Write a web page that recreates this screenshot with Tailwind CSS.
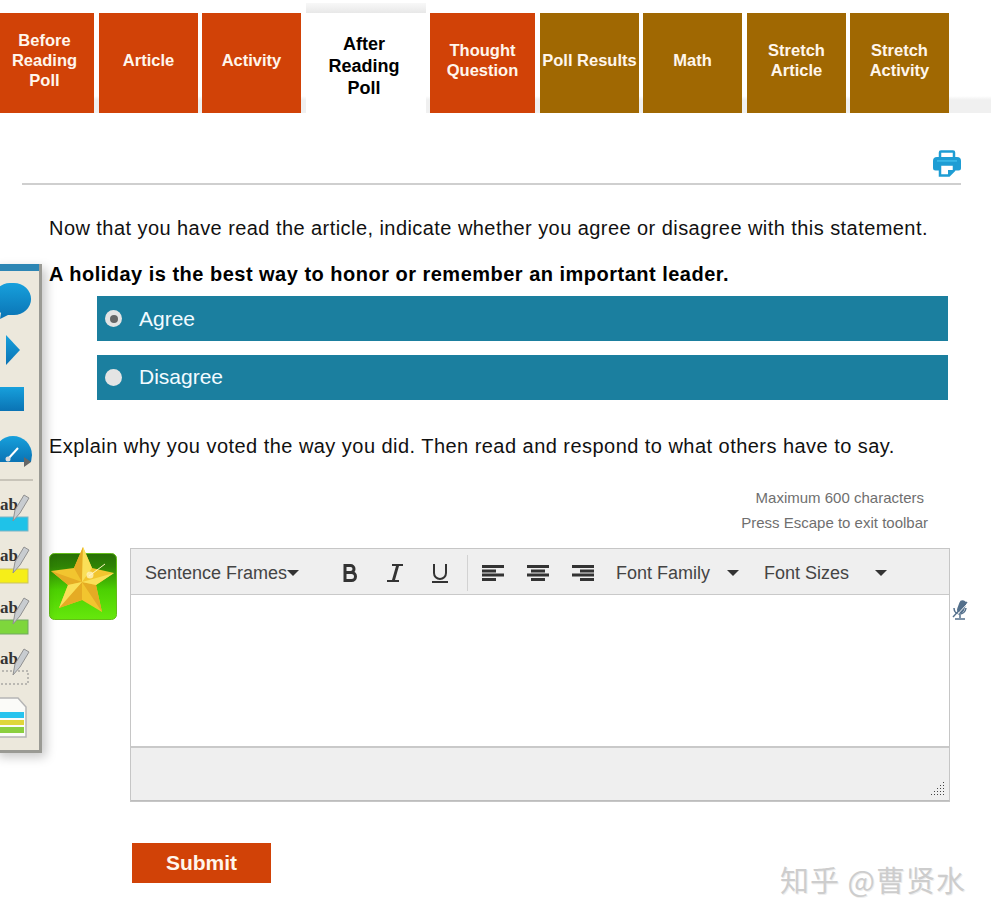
<!DOCTYPE html>
<html><head><meta charset="utf-8"><script src="https://cdn.jsdelivr.net/npm/@tailwindcss/browser@4"></script></head>
<body class="bg-white">
<div class="relative w-[991px] h-[920px] overflow-hidden bg-white font-['Liberation_Sans',sans-serif] text-[#111]">
  <!-- tabs -->
  <div class="h-[113px] pt-[13px] relative bg-[linear-gradient(to_bottom,#fff_0,#fff_96px,#f0f0f0_100px)]">
    <div class="flex items-start ml-[-5px] font-bold text-[16.5px] leading-[20px] text-[#fff6ec] text-center">
      <div class="w-[99px] h-[100px] bg-[#d14207] flex justify-center pt-[17px]"><span>Before<br>Reading<br>Poll</span></div>
      <div class="w-[99px] h-[100px] bg-[#d14207] ml-[5px] flex justify-center pt-[37px]">Article</div>
      <div class="w-[99px] h-[100px] bg-[#d14207] ml-[4px] flex justify-center pt-[37px]">Activity</div>
      <div class="w-[120px] h-[100px] ml-[5px] bg-white relative flex justify-center pt-[20px] pr-[4px] text-[18px] leading-[22px] text-black">
        <span class="absolute left-0 right-0 -top-[10px] h-[10px] bg-linear-to-b from-[#f8f8f8] to-[#e8e8e8]"></span>
        <span>After<br>Reading<br>Poll</span>
      </div>
      <div class="w-[105px] h-[100px] bg-[#d14207] ml-[4px] flex justify-center pt-[27px]">Thought<br>Question</div>
      <div class="w-[99px] h-[100px] bg-[#a06802] ml-[5px] flex justify-center pt-[37px] whitespace-nowrap">Poll Results</div>
      <div class="w-[99px] h-[100px] bg-[#a06802] ml-[4px] flex justify-center pt-[37px]">Math</div>
      <div class="w-[99px] h-[100px] bg-[#a06802] ml-[5px] flex justify-center pt-[27px]">Stretch<br>Article</div>
      <div class="w-[99px] h-[100px] bg-[#a06802] ml-[4px] flex justify-center pt-[27px]">Stretch<br>Activity</div>
    </div>
  </div>

  <!-- print header -->
  <div class="mx-[22px] w-[939px] h-[72px] border-b-2 border-[#cfcfcf] flex justify-end items-start pt-[37px]">
    <svg class="w-[28px] h-[27px]" viewBox="0 0 28 27">
      <path fill="none" stroke="#1e9dd4" stroke-width="2.500" d="M7 9V2.500a1 1 0 0 1 1-1h12a1 1 0 0 1 1 1V9"/>
      <path fill="#1e9dd4" d="M4 7h20a4 4 0 0 1 4 4v7a2.500 2.500 0 0 1-2.500 2.500H2.500A2.500 2.500 0 0 1 0 18v-7a4 4 0 0 1 4-4z"/>
      <path fill="#fff" stroke="#1e9dd4" stroke-width="2.500" d="M7 14.500h14v6l-5 5H7z"/>
      <path fill="#1e9dd4" d="M15 20h6l-6 6z"/>
      <rect x="4" y="10" width="20" height="1.800" fill="#38b7e6"/>
    </svg>
  </div>

  <!-- content -->
  <div class="pl-[49px] pr-[43px] text-[20px] leading-[24px]">
    <p class="mt-[31px] whitespace-nowrap tracking-[0.44px]">Now that you have read the article, indicate whether you agree or disagree with this statement.</p>
    <p class="mt-[22px] font-bold text-black whitespace-nowrap tracking-[0.49px]">A holiday is the best way to honor or remember an important leader.</p>
    <div class="ml-[48px] mt-[10px] flex flex-col gap-[14px] text-[#f2fbff] text-[21px]">
      <div class="h-[45px] bg-[#1b7f9f] flex items-center">
        <span class="w-[17px] h-[17px] ml-[8px] mr-[17px] rounded-full bg-[#e4e4e4] flex items-center justify-center"><span class="w-[8px] h-[8px] rounded-full bg-[#666]"></span></span>Agree
      </div>
      <div class="h-[45px] bg-[#1b7f9f] flex items-center pb-[1px]">
        <span class="w-[17px] h-[17px] ml-[8px] mr-[17px] rounded-full bg-[#e4e4e4]"></span>Disagree
      </div>
    </div>
    <p class="mt-[34px] whitespace-nowrap tracking-[0.46px]">Explain why you voted the way you did. Then read and respond to what others have to say.</p>
  </div>

  <div class="w-[928px] mt-[27px] text-right text-[15px] leading-[25px] text-[#6f6f6f]">
    <div class="pr-[4px]">Maximum 600 characters</div>
    <div>Press Escape to exit toolbar</div>
  </div>

  <!-- editor row -->
  <div class="flex items-start pl-[49px] mt-[13px]">
    <svg class="w-[69px] h-[75px] -mt-[1px] shrink-0" viewBox="0 0 69 75">
      <defs>
        <linearGradient id="g" x1="0" y1="0" x2="0" y2="1"><stop offset="0" stop-color="#286f06"/><stop offset="0.2" stop-color="#2f8405"/><stop offset="0.55" stop-color="#4cd002"/><stop offset="1" stop-color="#66e80c"/></linearGradient>
      </defs>
      <rect x="0.500" y="6.500" width="67" height="66" rx="5" fill="url(#g)" stroke="#63bd18"/>
      <path fill="#f2c52f" d="M34 0L43 21 65 26 47 38 53 65 33 53 10 61 19 38 2 24 25 21z"/>
      <path fill="#e5ab24" d="M34 0L33 35 25 21zM2 24L33 35 19 38zM33 35V53L10 61zM33 35L53 65 47 38z"/>
      <path fill="#fadf58" d="M34 0L43 21 33 35zM65 26L33 35 47 38zM19 38L33 35 10 61z"/>
      <path stroke="#fff6c0" stroke-width="1" d="M40 29L56 17"/>
      <circle cx="41" cy="28" r="3.500" fill="#fff6c8" opacity="0.75"/>
    </svg>
    <div class="ml-[12px] w-[820px] h-[254px] border border-[#c6c6c6] flex flex-col">
      <div class="h-[46px] shrink-0 pt-[3px] bg-[#efefef] border-b border-[#c9c9c9] relative flex items-center text-[18px] text-[#444]">
        <span class="ml-[14px] w-[155px] shrink-0 flex items-center whitespace-nowrap">Sentence Frames<span class="shrink-0 w-0 h-0 border-x-[6px] border-x-transparent border-t-[6px] border-t-[#333]"></span></span>
        <svg class="w-[16px] h-[18px] ml-[42px]" viewBox="0 0 16 18"><path fill="none" stroke="#333" stroke-width="3" d="M3 1.500h5.500a3.500 3.500 0 0 1 0 7H3zM3 8.500h6.500a4 4 0 0 1 0 8H3z"/></svg>
        <svg class="w-[16px] h-[18px] ml-[29px]" viewBox="0 0 16 18"><path fill="#333" d="M5 0h11v2h-4l-4 14h4v2H0v-2h5L9 2H5z"/></svg>
        <svg class="w-[16px] h-[20px] ml-[29px]" viewBox="0 0 16 20"><path fill="none" stroke="#333" stroke-width="2" d="M2 1v9a6 6 0 0 0 12 0V1"/><path fill="#333" d="M0 18h16v2H0z"/></svg>
        <span class="w-[1px] h-[36px] bg-[#d2d2d2] ml-[19px]"></span>
        <svg class="w-[22px] h-[16px] ml-[14px]" viewBox="0 0 22 16"><path fill="#333" d="M0 0h22v3H0zM0 4.500h14v3H0zM0 8.500h22v3H0zM0 13h14v3H0z"/></svg>
        <svg class="w-[22px] h-[16px] ml-[23px]" viewBox="0 0 22 16"><path fill="#333" d="M0 0h22v3H0zM4 4.500h14v3H4zM0 8.500h22v3H0zM4 13h14v3H4z"/></svg>
        <svg class="w-[22px] h-[16px] ml-[23px]" viewBox="0 0 22 16"><path fill="#333" d="M0 0h22v3H0zM8 4.500h14v3H8zM0 8.500h22v3H0zM8 13h14v3H8z"/></svg>
        <span class="ml-[22px]">Font Family</span>
        <span class="ml-[17px] w-0 h-0 border-x-[6px] border-x-transparent border-t-[6px] border-t-[#333]"></span>
        <span class="ml-[25px]">Font Sizes</span>
        <span class="ml-[26px] w-0 h-0 border-x-[6px] border-x-transparent border-t-[6px] border-t-[#333]"></span>
      </div>
      <div class="flex-1 bg-white"></div>
      <div class="h-[55px] shrink-0 bg-[#efefef] border-t-2 border-t-[#c9c9c9] border-b border-b-[#bdbdbd] relative">
        <svg class="absolute right-[4px] bottom-[4px] w-[14px] h-[14px]" viewBox="0 0 14 14" fill="#444">
          <rect x="12" y="0" width="1" height="1"/><rect x="9" y="3" width="1" height="1"/><rect x="12" y="3" width="1" height="1"/><rect x="6" y="6" width="1" height="1"/><rect x="9" y="6" width="1" height="1"/><rect x="12" y="6" width="1" height="1"/><rect x="3" y="9" width="1" height="1"/><rect x="6" y="9" width="1" height="1"/><rect x="9" y="9" width="1" height="1"/><rect x="12" y="9" width="1" height="1"/><rect x="0" y="12" width="1" height="1"/><rect x="3" y="12" width="1" height="1"/><rect x="6" y="12" width="1" height="1"/><rect x="9" y="12" width="1" height="1"/><rect x="12" y="12" width="1" height="1"/>
        </svg>
      </div>
    </div>
    <svg class="w-[18px] h-[22px] ml-[1px] mt-[51px] shrink-0" viewBox="0 0 18 22">
      <rect x="7" y="1" width="7" height="13" rx="3.500" fill="#54708c" transform="rotate(20 10 8)"/>
      <path fill="none" stroke="#54708c" stroke-width="1.500" d="M3 9c0 8 11 8 12 0M9 15v4M4 20h10"/>
      <path stroke="#54708c" stroke-width="1.500" d="M2 18L16 3"/>
      <path stroke="#fff" stroke-width="1" d="M3 19L17 4"/>
    </svg>
  </div>

  <div class="ml-[132px] mt-[41px] w-[139px] h-[40px] bg-[#d14207] text-[#fff6ec] font-bold text-[21px] flex items-center justify-center">Submit</div>

  <!-- floating toolbar -->
  <div class="absolute left-[-6px] top-[264px] w-[48px] h-[489px] bg-[#ece8dc] border-r-[3px] border-b-[3px] border-[#9a9a94] shadow-[4px_4px_10px_rgba(0,0,0,0.22)]">
    <div class="h-[7px] bg-[#2d86b4]"></div>
    <svg class="block" width="45" height="479" viewBox="0 0 45 479">
      <defs>
        <linearGradient id="b" x1="0" y1="0" x2="0" y2="1"><stop offset="0" stop-color="#17a0dc"/><stop offset="1" stop-color="#0a73b4"/></linearGradient>
      </defs>
      <path fill="url(#b)" d="M0 28a16 15 0 0 1 16-16h4a16 15 0 0 1 0 32h-6l-8 4 1-6a16 15 0 0 1-7-14z"/>
      <path fill="url(#b)" d="M12 64l14 15-14 15z"/>
      <rect x="0" y="116" width="30" height="24" fill="url(#b)"/>
      <path fill="url(#b)" d="M0 184a19 19 0 0 1 38 0l-1 7H0z"/>
      <path stroke="#fff" stroke-width="2" d="M14 188l10-11"/>
      <circle cx="14" cy="188" r="2.500" fill="#ddd"/>
      <path fill="#666" d="M30 186l7 5-7 5z"/>
      <path stroke="#bdb9ae" stroke-width="1.500" d="M0 209h39"/>
      <rect x="0" y="246" width="34" height="14" fill="#1fc2e8" stroke="#7fb4c4"/>
      <rect x="0" y="298" width="34" height="14" fill="#f6ee18" stroke="#c9c262"/>
      <rect x="0" y="349" width="34" height="14" fill="#7ed63c" stroke="#70a860"/>
      <rect x="0" y="400" width="34" height="13" fill="none" stroke="#888" stroke-dasharray="2 2"/>
      <path fill="#fbfbf8" stroke="#b5b5b5" stroke-width="1.500" d="M0 427h24l8 9v30H0z"/>
      <rect x="0" y="441" width="30" height="6" fill="#27c3ee"/>
      <rect x="0" y="449" width="30" height="5" fill="#dfd63a"/>
      <rect x="0" y="456" width="30" height="6" fill="#8bcf3f"/>
    </svg>
    <div class="absolute left-0 top-[231px] text-[17px] leading-[20px] font-bold font-['Liberation_Serif',serif] text-[#333]">
      <div class="ml-[6px] h-[51px]">ab</div><div class="ml-[6px] h-[52px]">ab</div><div class="ml-[6px] h-[51px]">ab</div><div class="ml-[6px]">ab</div>
    </div>
    <svg class="absolute left-0 top-[7px]" width="45" height="479" viewBox="0 0 45 479">
      <path transform="translate(0 -52)" fill="#c8ccd0" stroke="#909090" d="M19 302L21 291 30 276 35 279 26 294z"/>
      <path fill="#c8ccd0" stroke="#909090" d="M19 302L21 291 30 276 35 279 26 294z"/>
      <path transform="translate(0 51)" fill="#c8ccd0" stroke="#909090" d="M19 302L21 291 30 276 35 279 26 294z"/>
      <path transform="translate(0 102)" fill="#c8ccd0" stroke="#909090" d="M19 302L21 291 30 276 35 279 26 294z"/>
    </svg>
  </div>

  <!-- watermark -->
  <div class="absolute left-[780px] top-[861px] text-[29px] leading-[36px] tracking-[1px] whitespace-nowrap text-[#cdcdcd] [text-shadow:1px_1px_0_#eeeeee] font-['Noto_Sans_CJK_SC',sans-serif]">知乎 @曹贤水</div>
</div>
</body></html>
